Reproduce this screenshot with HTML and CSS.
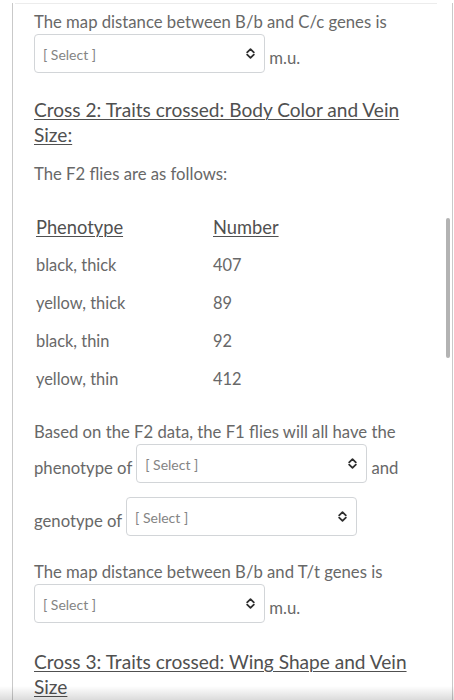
FILE: index.html
```html
<!DOCTYPE html>
<html>
<head>
<meta charset="utf-8">
<link rel="stylesheet" href="styles.css">
</head>
<body>
<div class="card">
  <div class="content">
    <p class="para first">The map distance between B/b and C/c genes is <span class="select"><span class="sel-text">[ Select ]</span><svg class="arrows" width="9" height="11" viewBox="0 0 9 11"><path d="M1.2 4.3 L4.5 1.2 L7.8 4.3 M1.2 6.7 L4.5 9.8 L7.8 6.7" fill="none" stroke="#2d2d2d" stroke-width="1.8" stroke-linecap="round" stroke-linejoin="round"/></svg></span> m.u.</p>

    <p class="heading h-first"><span class="u">Cross 2: Traits crossed: Body Color and Vein Size:</span></p>

    <p class="para">The F2 flies are as follows:</p>

    <table class="data">
      <tr><th><span class="u">Phenotype</span></th><th><span class="u">Number</span></th></tr>
      <tr><td>black, thick</td><td>407</td></tr>
      <tr><td>yellow, thick</td><td>89</td></tr>
      <tr><td>black, thin</td><td>92</td></tr>
      <tr><td>yellow, thin</td><td>412</td></tr>
    </table>

    <p class="para based">Based on the F2 data, the F1 flies will all have the phenotype of <span class="select"><span class="sel-text">[ Select ]</span><svg class="arrows" width="9" height="11" viewBox="0 0 9 11"><path d="M1.2 4.3 L4.5 1.2 L7.8 4.3 M1.2 6.7 L4.5 9.8 L7.8 6.7" fill="none" stroke="#2d2d2d" stroke-width="1.8" stroke-linecap="round" stroke-linejoin="round"/></svg></span> and genotype of <span class="select"><span class="sel-text">[ Select ]</span><svg class="arrows" width="9" height="11" viewBox="0 0 9 11"><path d="M1.2 4.3 L4.5 1.2 L7.8 4.3 M1.2 6.7 L4.5 9.8 L7.8 6.7" fill="none" stroke="#2d2d2d" stroke-width="1.8" stroke-linecap="round" stroke-linejoin="round"/></svg></span></p>

    <p class="para">The map distance between B/b and T/t genes is <span class="select"><span class="sel-text">[ Select ]</span><svg class="arrows" width="9" height="11" viewBox="0 0 9 11"><path d="M1.2 4.3 L4.5 1.2 L7.8 4.3 M1.2 6.7 L4.5 9.8 L7.8 6.7" fill="none" stroke="#2d2d2d" stroke-width="1.8" stroke-linecap="round" stroke-linejoin="round"/></svg></span> m.u.</p>

    <p class="heading h-second"><span class="u">Cross 3: Traits crossed: Wing Shape and Vein Size</span></p>
  </div>
  <div class="scrollbar"></div>
</div>
<div class="bottom-shade"></div>
</body>
</html>
```

FILE: styles.css
```css
html, body {
  margin: 0;
  padding: 0;
  background: #ffffff;
  height: 700px;
  overflow: hidden;
}

body {
  font-family: Lato, "Open Sans", sans-serif;
  color: #686868;
  position: relative;
}

.card {
  position: relative;
  margin: 3px 1px 0 12px;
  border-left: 1px solid #c9c9c9;
  border-right: 1px solid #c9c9c9;
  height: 760px;
}

.card::before {
  content: "";
  position: absolute;
  top: 0;
  left: 2px;
  width: 422px;
  border-top: 1px solid #ececec;
}

.content {
  padding: 7px 20px 0 21px;
}

.para {
  font-size: 16.7px;
  line-height: 24px;
  margin: 0;
}

.heading {
  font-size: 19.1px;
  line-height: 25px;
  color: #505050;
  margin: 0 0 15px;
}

.h-first {
  margin-top: 10px;
}

.h-second {
  margin-top: 12px;
}

.u {
  text-decoration: underline;
  text-decoration-thickness: 1px;
  text-underline-offset: 2px;
}

.select {
  display: inline-flex;
  box-sizing: border-box;
  width: 231px;
  height: 39px;
  border: 1px solid #d2d5d8;
  border-radius: 4px;
  padding: 4px 9px 0 8px;
  vertical-align: 4px;
  margin: 0 0 14px;
  justify-content: space-between;
  align-items: flex-start;
  background: #fff;
}

.sel-text {
  font-size: 14px;
  line-height: 32px;
  color: #848484;
}

.arrows {
  margin-top: 9px;
}

.data {
  border-collapse: collapse;
  margin: 22px 0 22px 0;
  line-height: 24px;
}

.data th, .data td {
  text-align: left;
  padding: 7px 2px;
  font-weight: normal;
}

.data td {
  font-size: 16.4px;
}

.data th {
  font-size: 18.3px;
  color: #505050;
}

.data th:first-child, .data td:first-child {
  width: 173px;
}

.based {
  margin-bottom: 10px;
}

.scrollbar {
  position: absolute;
  left: 433px;
  top: 215px;
  width: 4px;
  height: 140px;
  border-radius: 2px;
  background: #b3b3b3;
}

.bottom-shade {
  position: absolute;
  left: 0;
  right: 0;
  top: 686px;
  height: 14px;
  background: linear-gradient(to bottom, rgba(0,0,0,0), rgba(0,0,0,0.14));
}
```
